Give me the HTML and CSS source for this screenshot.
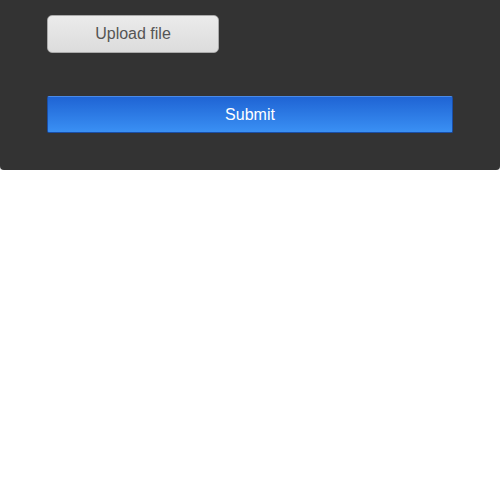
FILE: index.html
```html
<!DOCTYPE html>
<html>
<head>
<meta charset="utf-8">
<link rel="stylesheet" href="styles.css">
</head>
<body>
<div class="panel">
  <div class="upload-row">
    <button class="upload">Upload file</button>
  </div>
  <button class="submit">Submit</button>
</div>
</body>
</html>
```
FILE: styles.css
```css
html, body { margin: 0; padding: 0; background: #fff; }
body { font-family: "Liberation Sans", Arial, sans-serif; }
.panel {
  background: #333333;
  border-radius: 0 0 4px 4px;
  box-shadow: 0 2px 4px rgba(0,0,0,0.15);
  padding: 15px 47px 37px 47px;
  height: 118px;
}
.upload-row { display: flex; }
.upload {
  width: 172px;
  height: 38px;
  border: 1px solid #aaa;
  border-radius: 5px;
  background: linear-gradient(#ebebeb, #dcdcdc);
  color: #555;
  font-family: "Liberation Sans", Arial, sans-serif;
  font-size: 16px;
  padding: 0;
}
.submit {
  display: block;
  margin-top: 43px;
  width: 406px;
  height: 37px;
  border: 1px solid #1a4ea6;
  border-top-color: #4a8ae8;
  border-radius: 2px;
  background: linear-gradient(#1f64d4, #3a90f4);
  color: #fff;
  font-family: "Liberation Sans", Arial, sans-serif;
  font-size: 16px;
  padding: 0;
}
```
